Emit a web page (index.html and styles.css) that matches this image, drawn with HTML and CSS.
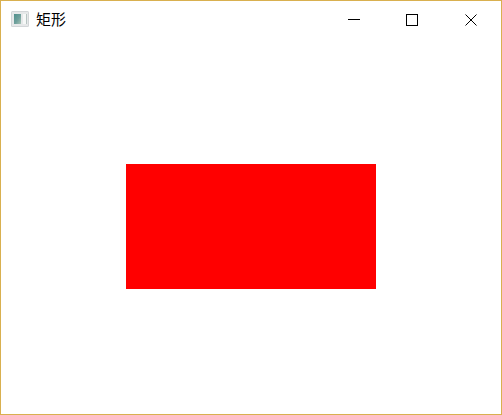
FILE: index.html
```html
<!DOCTYPE html>
<html lang="zh">
<head>
<meta charset="utf-8">
<title>矩形</title>
<link rel="stylesheet" href="styles.css">
</head>
<body>
<div class="window">
  <header class="titlebar">
    <div class="title-left">
      <svg class="app-icon" width="18" height="16" viewBox="0 0 18 16">
        <defs>
          <linearGradient id="g" x1="0" y1="0" x2="1" y2="1">
            <stop offset="0" stop-color="#4f8f8c"/>
            <stop offset="0.55" stop-color="#6fa09c"/>
            <stop offset="1" stop-color="#a9c4b6"/>
          </linearGradient>
        </defs>
        <rect x="0" y="0" width="18" height="16" rx="1.5" fill="#d3d6d8"/>
        <rect x="1" y="1" width="16" height="14" fill="#e6e8e9"/>
        <rect x="3" y="3" width="7" height="10" fill="url(#g)"/>
        <rect x="12" y="3" width="3" height="10" fill="#f6f8f7"/>
        <rect x="15" y="3" width="1" height="10" fill="#b8c4c2"/>
      </svg>
      <span class="title-text">矩形</span>
    </div>
    <div class="controls">
      <div class="ctl">
        <svg width="12" height="12" viewBox="0 0 12 12"><path d="M0 5.5H12" stroke="#000" fill="none"/></svg>
      </div>
      <div class="ctl">
        <svg width="12" height="12" viewBox="0 0 12 12"><rect x="0.5" y="0.5" width="11" height="11" stroke="#000" fill="none"/></svg>
      </div>
      <div class="ctl">
        <svg width="12" height="12" viewBox="0 0 12 12"><path d="M0.5 0.5L11.5 11.5M11.5 0.5L0.5 11.5" stroke="#000" fill="none"/></svg>
      </div>
    </div>
  </header>
  <main class="client">
    <div class="rect"></div>
  </main>
</div>
</body>
</html>
```

FILE: styles.css
```css
html, body {
  margin: 0;
  padding: 0;
  background: #fff;
  overflow: hidden;
}

.window {
  box-sizing: border-box;
  width: 502px;
  height: 415px;
  border: 1px solid #d9b04f;
  display: flex;
  flex-direction: column;
  background: #fff;
}

.titlebar {
  height: 38px;
  flex: none;
  display: flex;
  justify-content: space-between;
  align-items: flex-start;
}

.title-left {
  display: flex;
  align-items: center;
  gap: 7px;
  height: 36px;
  padding-left: 10px;
}

.app-icon {
  display: block;
}

.title-text {
  font-family: "Noto Sans CJK SC", "Noto Sans", sans-serif;
  font-size: 15px;
  line-height: 20px;
  color: #000;
}

.controls {
  display: flex;
  padding-right: 1px;
}

.ctl {
  width: 58.5px;
  height: 38px;
  display: flex;
  align-items: center;
  justify-content: center;
}

.ctl svg {
  display: block;
}

.client {
  flex: 1;
  display: flex;
  align-items: center;
  justify-content: center;
}

.rect {
  width: 250px;
  height: 125px;
  background: #ff0000;
}
```
